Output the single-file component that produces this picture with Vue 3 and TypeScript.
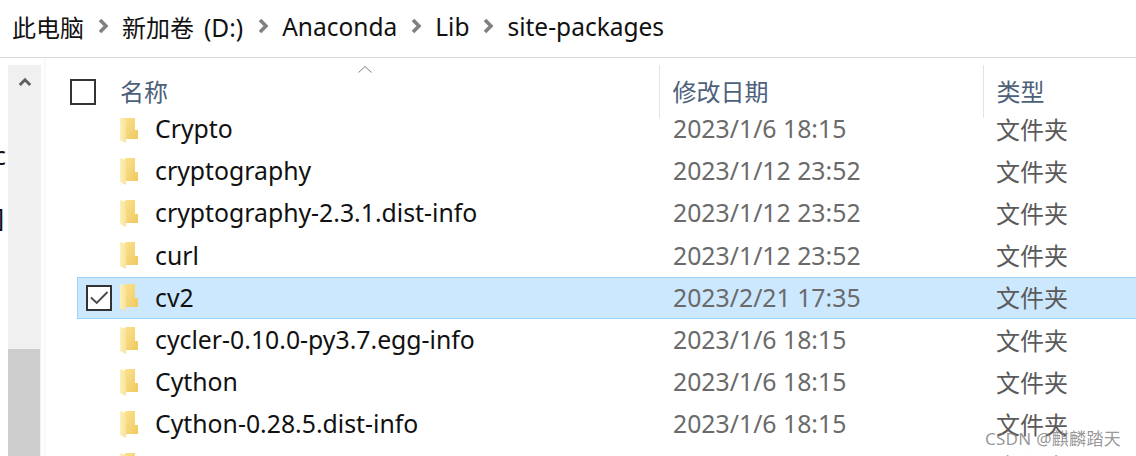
<script setup lang="ts">
interface Row { name: string; date: string; selected?: boolean }
interface Crumb { zh?: string; en?: string }
const crumbs: Crumb[] = [
  { zh: '此电脑' },
  { zh: '新加卷', en: '(D:)' },
  { en: 'Anaconda' },
  { en: 'Lib' },
  { en: 'site-packages' },
]
const rows: Row[] = [
  { name: 'Crypto', date: '2023/1/6 18:15' },
  { name: 'cryptography', date: '2023/1/12 23:52' },
  { name: 'cryptography-2.3.1.dist-info', date: '2023/1/12 23:52' },
  { name: 'curl', date: '2023/1/12 23:52' },
  { name: 'cv2', date: '2023/2/21 17:35', selected: true },
  { name: 'cycler-0.10.0-py3.7.egg-info', date: '2023/1/6 18:15' },
  { name: 'Cython', date: '2023/1/6 18:15' },
  { name: 'Cython-0.28.5.dist-info', date: '2023/1/6 18:15' },
  { name: 'cytoolz', date: '2023/1/6 18:15' },
]
</script>

<template>
  <div class="win">
    <nav class="crumbs">
      <template v-for="(c, i) in crumbs" :key="i">
        <span class="crumb"><span v-if="c.zh" class="zh">{{ c.zh }}</span><span v-if="c.en" class="en">{{ c.en }}</span></span>
        <svg v-if="i < crumbs.length - 1" class="sep" width="10" height="16" viewBox="0 0 10 16">
          <path d="M2 2 L8 8 L2 14" fill="none" stroke="#808080" stroke-width="3.6" />
        </svg>
      </template>
    </nav>
    <div class="body">
      <div class="edge">
        <span class="edge-a">c</span>
        <span class="edge-b">]</span>
      </div>
      <div class="scroll">
        <svg class="up" width="14" height="10" viewBox="0 0 14 10">
          <path d="M1.8 8 L7 2.8 L12.2 8" fill="none" stroke="#606060" stroke-width="3" />
        </svg>
        <div class="thumb"></div>
      </div>
      <div class="pane">
        <div class="head">
          <div class="head-check"><span class="box"></span></div>
          <div class="h-name">名称
            <svg class="sort" width="16" height="9" viewBox="0 0 16 9">
              <path d="M1.5 7.5 L8 1.5 L14.5 7.5" fill="none" stroke="#808080" stroke-width="1" />
            </svg>
          </div>
          <div class="h-col h-date">修改日期</div>
          <div class="h-col h-type">类型</div>
        </div>
        <div class="list">
          <div v-for="r in rows" :key="r.name" class="row" :class="{ sel: r.selected }">
            <div class="row-check">
              <span v-if="r.selected" class="box">
                <svg width="22" height="22" viewBox="0 0 22 22">
                  <path d="M3 10.5 L8.7 16 L19.5 5" fill="none" stroke="#484848" stroke-width="1.9" />
                </svg>
              </span>
            </div>
            <svg class="folder" width="18" height="27" viewBox="0 0 18 27">
              <defs>
                <linearGradient id="fb" x1="0" x2="1" y1="0" y2="1">
                  <stop offset="0" stop-color="#fbe28f" />
                  <stop offset="1" stop-color="#efc95f" />
                </linearGradient>
                <linearGradient id="fl" x1="0" x2="1" y1="0" y2="0">
                  <stop offset="0" stop-color="#fdf0b8" />
                  <stop offset="1" stop-color="#f9e19a" />
                </linearGradient>
              </defs>
              <path d="M5 0 H15 V14 H18 V23 H5 Z" fill="url(#fb)" />
              <path d="M0 0 L6 2 V27 L0 24 Z" fill="url(#fl)" />
            </svg>
            <span class="name">{{ r.name }}</span>
            <span class="date">{{ r.date }}</span>
            <span class="type">文件夹</span>
          </div>
        </div>
      </div>
    </div>
    <div class="mark">CSDN @麒麟踏天</div>
  </div>
</template>

<style scoped>
.win {
  position: relative;
  width: 1136px;
  height: 456px;
  overflow: hidden;
  background: #fff;
  font-family: "Noto Sans", "Noto Sans CJK SC", sans-serif;
  color: #111;
}
.crumbs {
  height: 58px;
  box-sizing: border-box;
  border-bottom: 1px solid #d9d9d9;
  display: flex;
  align-items: center;
  padding: 0 0 5px 12px;
  font-size: 24.5px;
  gap: 14px;
  white-space: nowrap;
}
.zh {
  font-size: 24px;
}
.zh + .en {
  margin-left: 10px;
  margin-right: 1px;
}
.sep {
  flex: none;
}
.body {
  display: flex;
  height: 398px;
}
.edge {
  width: 8px;
  flex: none;
  position: relative;
  overflow: hidden;
  font-size: 24.8px;
}
.edge-a {
  position: absolute;
  left: -6px;
  top: 80px;
}
.edge-b {
  position: absolute;
  left: -4px;
  top: 142px;
}
.scroll {
  width: 33px;
  flex: none;
  margin-top: 7px;
  background: #f0f0f0;
  position: relative;
  display: flex;
  flex-direction: column;
  align-items: center;
}
.up {
  margin-top: 12px;
}
.thumb {
  position: absolute;
  left: 0;
  right: 1px;
  top: 284px;
  bottom: 0;
  background: #cdcdcd;
}
.pane {
  flex: 1;
  min-width: 0;
  margin-left: 3px;
  border-left: 2px solid #f8f8f8;
  padding-left: 25px;
  overflow: hidden;
}
.head {
  height: 50px;
  display: flex;
  align-items: flex-start;
  font-size: 24px;
  color: #4c607a;
  position: relative;
}
.box {
  width: 26px;
  height: 26px;
  box-sizing: border-box;
  border: 2px solid #333;
  display: block;
  background: #fff;
}
.box svg {
  display: block;
}
.head-check {
  width: 26px;
  flex: none;
  margin-top: 21px;
  margin-left: -1px;
  margin-right: 24px;
}
.h-name {
  width: 539px;
  flex: none;
  line-height: 34px;
  margin-top: 17px;
  position: relative;
}
.sort {
  position: absolute;
  left: 237px;
  top: -10px;
}
.h-col {
  flex: none;
  box-sizing: border-box;
  height: 53px;
  margin-top: 7px;
  padding: 10px 0 0 12.5px;
  line-height: 34px;
  border-left: 1px solid #e3e3e3;
  position: relative;
  z-index: 1;
}
.h-date {
  width: 324px;
}
.list {
  margin-left: 6px;
}
.row {
  height: 42.2px;
  width: 1090px;
  box-sizing: border-box;
  display: flex;
  align-items: center;
  font-size: 24.8px;
  white-space: nowrap;
  border: 1px solid transparent;
}
.row.sel {
  background: #cce8ff;
  border-color: #99d1ff;
}
.row:first-child .folder {
  clip-path: inset(2.4px 0 0 0);
}
.row-check {
  width: 42px;
  flex: none;
  display: flex;
  justify-content: center;
}
.folder {
  flex: none;
}
.name,
.date,
.type {
  margin-bottom: 2px;
}
.name {
  width: 518px;
  flex: none;
  margin-left: 17px;
}
.date {
  width: 323px;
  flex: none;
  color: #6a6a6a;
}
.type {
  color: #5a5a5a;
  font-size: 24px;
}
.mark {
  position: absolute;
  right: 15px;
  top: 425px;
  font-size: 17px;
  color: rgba(125, 125, 125, 0.8);
  letter-spacing: 0.3px;
}
</style>
